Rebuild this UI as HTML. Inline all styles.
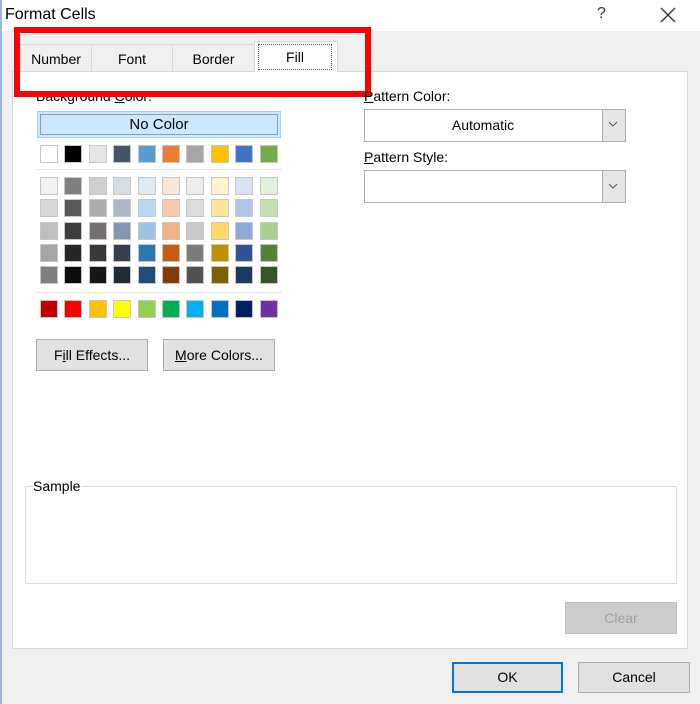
<!DOCTYPE html>
<html><head><style>
*{box-sizing:border-box;margin:0;padding:0}
body{width:700px;height:704px;background:#f0f0f0;font-family:"Liberation Sans",sans-serif;font-size:14px;color:#000;position:relative;overflow:hidden}
.a{position:absolute}
.sw{position:absolute;width:18px;height:18px;border:1px solid #c6c6c6}
.btn{position:absolute;background:#e1e1e1;border:1px solid #adadad;text-align:center}
u{text-decoration:underline}
</style></head><body>
<div class="a" style="left:0;top:0;width:700px;height:31px;background:#fff"></div>
<div class="a" style="left:0;top:0;width:2px;height:704px;background:#9bb7d8"></div>
<div class="a" style="left:5px;top:6px;font-size:16px">Format Cells</div>
<div class="a" style="left:597px;top:5px;font-size:16px;color:#333">?</div>
<svg class="a" style="left:660px;top:7px" width="16" height="16"><path d="M1 1L15 15M15 1L1 15" stroke="#333" stroke-width="1.3"/></svg>

<div class="a" style="left:20px;top:44px;width:72px;height:27px;background:#f0f0f0;border:1px solid #d9d9d9;border-bottom:none;text-align:center;line-height:29px">Number</div>
<div class="a" style="left:92px;top:44px;width:81px;height:27px;border:1px solid #d9d9d9;border-bottom:none;border-left:none;text-align:center;line-height:29px">Font</div>
<div class="a" style="left:173px;top:44px;width:82px;height:27px;border:1px solid #d9d9d9;border-bottom:none;border-left:none;text-align:center;line-height:29px">Border</div>
<div class="a" style="left:12px;top:71px;width:676px;height:578px;background:#fff;border:1px solid #d9d9d9"></div>
<div class="a" style="left:254px;top:41px;width:84px;height:31px;background:#fff;border:1px solid #d9d9d9;border-bottom:none"></div>
<div class="a" style="left:258px;top:44px;width:74px;height:26px;border:1px dotted #555;text-align:center;line-height:24px">Fill</div>

<div class="a" style="left:36px;top:88px;color:#000">Background <u>C</u>olor:</div>
<div class="a" style="left:14px;top:27px;width:357px;height:70px;border:6px solid #f00"></div>

<div class="a" style="left:37px;top:111px;width:244px;height:27px;background:#cce8ff;border:1px solid #99d1ff"></div>
<div class="a" style="left:40px;top:114px;width:238px;height:21px;border:1px solid #9a9a9a;text-align:center;line-height:19px;font-size:15px">No Color</div>

<div id="g"></div>
<div class="a" style="left:36px;top:169px;width:246px;height:1px;background:#e6e6e6"></div>
<div class="a" style="left:36px;top:292px;width:246px;height:1px;background:#e6e6e6"></div>

<div class="btn" style="left:36px;top:339px;width:112px;height:32px;line-height:30px">F<u>i</u>ll Effects...</div>
<div class="btn" style="left:163px;top:339px;width:112px;height:32px;line-height:30px"><u>M</u>ore Colors...</div>

<div class="a" style="left:364px;top:88px"><u>P</u>attern Color:</div>
<div class="a" style="left:364px;top:109px;width:262px;height:33px;border:1px solid #adadad;background:#fff;text-align:center;line-height:31px;padding-right:24px">Automatic</div>
<div class="a" style="left:602px;top:110px;width:23px;height:31px;background:#e5e5e5;border-left:1px solid #adadad"></div>
<svg class="a" style="left:608px;top:121px" width="10" height="6"><path d="M1 1L5 5L9 1" stroke="#555" fill="none"/></svg>
<div class="a" style="left:364px;top:149px"><u>P</u>attern Style:</div>
<div class="a" style="left:364px;top:170px;width:262px;height:33px;border:1px solid #adadad;background:#fff"></div>
<div class="a" style="left:602px;top:171px;width:23px;height:31px;background:#e5e5e5;border-left:1px solid #adadad"></div>
<svg class="a" style="left:608px;top:183px" width="10" height="6"><path d="M1 1L5 5L9 1" stroke="#555" fill="none"/></svg>

<div class="a" style="left:25px;top:486px;width:652px;height:98px;border:1px solid #dcdcdc"></div>
<div class="a" style="left:33px;top:478px;background:#fff;padding-right:2px">Sample</div>
<div class="a" style="left:565px;top:602px;width:112px;height:32px;background:#cccccc;border:1px solid #bfbfbf;color:#a0a0a0;text-align:center;line-height:30px">Clear</div>

<div class="btn" style="left:452px;top:662px;width:111px;height:31px;border:2px solid #0078d7;line-height:27px">OK</div>
<div class="btn" style="left:578px;top:662px;width:112px;height:31px;line-height:29px">Cancel</div>
<script>
var rows=[
["#ffffff","#000000","#e7e6e6","#44546a","#5b9bd5","#ed7d31","#a5a5a5","#ffc000","#4472c4","#70ad47"],
["#f2f2f2","#7f7f7f","#d0cece","#d6dce4","#deebf6","#fbe5d5","#ededed","#fff2cc","#d9e2f3","#e2efd9"],
["#d8d8d8","#595959","#aeabab","#adb9ca","#bdd7ee","#f7cbac","#dbdbdb","#fee599","#b4c6e7","#c5e0b3"],
["#bfbfbf","#3f3f3f","#757070","#8496b0","#9cc3e5","#f4b183","#c9c9c9","#ffd965","#8eaadb","#a8d08d"],
["#a5a5a5","#262626","#3a3838","#323f4f","#2e75b5","#c55a11","#7b7b7b","#bf9000","#2f5496","#538135"],
["#7f7f7f","#0c0c0c","#171616","#222a35","#1e4e79","#843c0b","#525252","#7f6000","#1f3864","#375623"],
["#c00000","#ff0000","#ffc000","#ffff00","#92d050","#00b050","#00b0f0","#0070c0","#002060","#7030a0"]];
var ys=[145,177,199,222,244,266,300],h="";
rows.forEach(function(r,i){r.forEach(function(c,j){h+='<div class="sw" style="left:'+(40+j*24.4)+'px;top:'+ys[i]+'px;background:'+c+'"></div>';});});
document.getElementById("g").innerHTML=h;
</script>
</body></html>
